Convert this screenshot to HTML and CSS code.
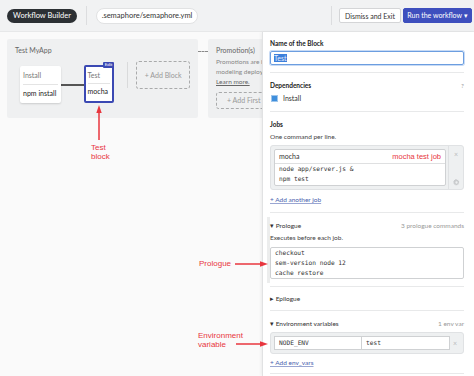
FILE: index.html
```html
<!DOCTYPE html>
<html lang="en">
<head>
  <meta charset="UTF-8">
  <meta name="viewport" content="width=device-width, initial-scale=1.0">
  <title>Workflow Builder</title>
  <link rel="stylesheet" href="styles.css">
</head>
<body>
  <header class="topbar">
    <div class="topbar-group">
      <span class="pill pill-dark">Workflow Builder</span>
      <span class="topbar-sep"></span>
      <span class="pill pill-file">.semaphore/semaphore.yml</span>
    </div>
    <div class="topbar-group">
      <span class="topbar-sep"></span>
      <button class="btn btn-dismiss">Dismiss and Exit</button>
      <button class="btn btn-primary">Run the workflow ▾</button>
    </div>
  </header>

  <main class="workspace">
    <section class="canvas">
      <div class="pipeline">
        <div class="stage">
          <div class="stage-title">Test MyApp</div>
          <div class="blocks">
            <div class="block block-install">
              <div class="block-name">Install</div>
              <div class="block-cmd">npm install</div>
            </div>
            <div class="block-link"></div>
            <div class="block block-active">
              <span class="edit-badge">Edit</span>
              <div class="block-name">Test</div>
              <div class="block-cmd">mocha</div>
            </div>
            <div class="blocks-sep"></div>
            <div class="add-block">+ Add Block</div>
          </div>
        </div>
        <div class="stage-link"></div>
        <div class="stage promotions">
          <div class="stage-title">Promotion(s)</div>
          <p class="promo-text">Promotions are ideal for<br>modeling deployment pipelines.<br><a class="promo-link">Learn more.</a></p>
          <div class="add-promo">+ Add First Promotion</div>
        </div>
      </div>
    </section>

    <aside class="panel">
      <div class="panel-section section-name">
        <div class="field-title">Name of the Block</div>
        <div class="text-input is-focused"><span class="selection">Test</span></div>
      </div>

      <div class="panel-section section-deps">
        <div class="section-head">
          <span class="field-title">Dependencies</span>
          <span class="hint">?</span>
        </div>
        <label class="checkbox-row"><span class="checkbox"></span><span>Install</span></label>
      </div>

      <div class="panel-section section-jobs">
        <div class="field-title">Jobs</div>
        <div class="field-note">One command per line.</div>
        <div class="job-list">
          <div class="job">
            <div class="job-name">mocha<span class="note note-inline">mocha test job</span></div>
            <div class="code job-code">node app/server.js &amp;<br>npm test</div>
          </div>
          <div class="job-side">
            <span class="remove">×</span>
            <svg class="gear" width="7" height="7" viewBox="0 0 16 16">
              <path d="M8 0.5l1.4 1.9 2.3-.6.3 2.4 2.2.9-1 2.2 1.3 2-2.1 1.1.1 2.4-2.4-.1-1 2.2L8 13.7l-1.9 1.4-.6-2.3-2.4.3-.3-2.4-2.2-.9 1-2.2L.3 5.6l2.1-1.1-.1-2.4 2.4.1 1-2.2L8 .5z" fill="#c9cbcd"/>
              <circle cx="8" cy="8" r="2.6" fill="#eef0f1"/>
            </svg>
          </div>
        </div>
        <a class="add-link">+ Add another job</a>
      </div>

      <div class="panel-section section-prologue">
        <div class="section-head">
          <span class="field-title toggle">▾ Prologue</span>
          <span class="count">3 prologue commands</span>
        </div>
        <div class="field-note">Executes before each job.</div>
        <div class="code code-box">checkout<br>sem-version node 12<br>cache restore</div>
      </div>

      <div class="panel-section section-epilogue">
        <span class="field-title toggle">▸ Epilogue</span>
      </div>

      <div class="panel-section section-env">
        <div class="section-head">
          <span class="field-title toggle">▾ Environment variables</span>
          <span class="count">1 env var</span>
        </div>
        <div class="env-list">
          <span class="env-input env-name">NODE_ENV</span>
          <span class="env-input env-value">test</span>
          <span class="remove">×</span>
        </div>
        <a class="add-link">+ Add env_vars</a>
      </div>
    </aside>

    <div class="annotations">
      <svg class="arrows" width="474" height="344" viewBox="0 0 474 344">
        <line x1="99" y1="108" x2="99" y2="80" stroke="#e8363e" stroke-width="1.5"/>
        <polygon points="99,73 96.3,81 101.7,81" fill="#e8363e"/>
        <line x1="235" y1="232" x2="261" y2="232" stroke="#e8363e" stroke-width="1.5"/>
        <polygon points="268,232 260,229.3 260,234.7" fill="#e8363e"/>
        <line x1="236" y1="312" x2="261" y2="312" stroke="#e8363e" stroke-width="1.5"/>
        <polygon points="268,312 260,309.3 260,314.7" fill="#e8363e"/>
      </svg>
      <div class="note note-test">Test<br>block</div>
      <div class="note note-prologue">Prologue</div>
      <div class="note note-env">Environment<br>variable</div>
    </div>
  </main>
</body>
</html>
```

FILE: styles.css
```css
*, *::before, *::after {
  margin: 0;
  padding: 0;
  box-sizing: border-box;
}
html, body {
  width: 474px;
  height: 376px;
  overflow: hidden;
}
body {
  font-family: Lato, "Noto Sans", sans-serif;
  font-size: 7px;
  color: #333;
  background: #fafafa;
}

/* top bar */
.topbar {
  height: 32px;
  display: flex;
  align-items: center;
  justify-content: space-between;
  padding: 0 2px 0 7px;
  background: #f1f2f3;
  border-bottom: 1px solid #e7e8e9;
}
.topbar-group {
  display: flex;
  align-items: center;
}
.topbar-sep {
  width: 1px;
  height: 19px;
  background: #dcdddf;
  margin: 0 9px;
}
.topbar-group:last-child .topbar-sep {
  margin: 0 7px 0 0;
}
.pill {
  display: inline-block;
  text-align: center;
  border-radius: 8px;
  font-size: 7.5px;
}
.pill-dark {
  width: 70px;
  height: 14px;
  line-height: 14px;
  background: #2c3034;
  color: #fff;
}
.pill-file {
  width: 102px;
  height: 16px;
  line-height: 14px;
  background: #fff;
  border: 1px solid #e1e2e3;
  color: #333;
}
.btn {
  height: 15px;
  font: inherit;
  font-size: 7px;
  border-radius: 2px;
  border: 1px solid #d4d5d7;
  background: #fff;
  color: #333;
}
.btn-dismiss {
  width: 62px;
}
.btn-primary {
  width: 69px;
  margin-left: 2px;
  background: #3e4fbe;
  border-color: #3e4fbe;
  color: #fff;
}

/* workspace */
.workspace {
  position: relative;
  display: flex;
  height: 344px;
}
.canvas {
  flex: 1;
  overflow: hidden;
}
.pipeline {
  display: flex;
  align-items: flex-start;
  padding: 7px 0 0 7px;
}
.stage {
  flex-shrink: 0;
  width: 191px;
  height: 79px;
  background: #eff0f1;
  border-radius: 2px;
  padding: 5px 8px 0;
}
.stage-title {
  line-height: 12px;
  font-size: 7px;
  color: #666;
}
.stage-link {
  flex-shrink: 0;
  width: 10px;
  margin-top: 12px;
  border-top: 1px dashed #8a8a8a;
}
.blocks {
  display: flex;
  align-items: flex-start;
  margin-top: 5px;
  padding-left: 5px;
}
.block {
  position: relative;
  background: #fff;
  border-radius: 2px;
  padding: 0 3px;
  font-size: 7px;
  white-space: nowrap;
}
.block-install {
  width: 41px;
  height: 37px;
  margin-top: 5px;
  box-shadow: 0 1px 2px rgba(0, 0, 0, 0.15);
}
.block-active {
  width: 31px;
  height: 38px;
  margin-top: 4px;
  padding: 0 2px;
  border: 2px solid #3b49b3;
}
.block-name {
  line-height: 18px;
  color: #777;
  border-bottom: 1px solid #e4e4e4;
}
.block-active .block-name {
  line-height: 16px;
}
.block-cmd {
  line-height: 16px;
  color: #222;
}
.block-active .block-cmd {
  line-height: 15px;
}
.edit-badge {
  position: absolute;
  top: -5px;
  right: -2px;
  padding: 0 2px;
  font-size: 4.5px;
  line-height: 6px;
  color: #fff;
  background: #3b49b3;
  border-radius: 1px;
}
.block-link {
  width: 23px;
  height: 1.5px;
  margin-top: 23px;
  background: #555;
}
.blocks-sep {
  width: 1px;
  height: 26px;
  margin: 1px 0 0 13px;
  background: #d9dadb;
}
.add-block {
  width: 54px;
  height: 28px;
  margin-left: 8px;
  line-height: 26px;
  text-align: center;
  border: 1px dashed #a9aaab;
  border-radius: 3px;
  color: #999;
  font-size: 7px;
}
.promotions {
  width: 130px;
}
.promo-text {
  line-height: 10px;
  margin-top: 1px;
  color: #888;
  white-space: nowrap;
  font-size: 6.5px;
}
.promo-link {
  color: #666;
  text-decoration: underline;
}
.add-promo {
  width: 90px;
  height: 17px;
  margin-top: 5px;
  padding-left: 10px;
  line-height: 15px;
  border: 1px dashed #a9aaab;
  border-radius: 3px;
  color: #999;
  white-space: nowrap;
}

/* side panel */
.panel {
  position: relative;
  z-index: 1;
  width: 212px;
  background: #fff;
  border-left: 1px solid #e1e2e3;
  box-shadow: -1px 0 3px rgba(0, 0, 0, 0.06);
  padding: 0 10px 0 7px;
  font-size: 6.5px;
}
.panel-section {
  border-bottom: 1px solid #e8e9ea;
}
.section-name {
  padding: 7px 0 7px;
}
.section-deps {
  padding: 8px 0 8px;
}
.section-jobs {
  padding: 8px 0 7px;
}
.section-prologue {
  padding: 8px 0 7px;
  box-shadow: -7px 0 0 -4px #eceded;
}
.section-epilogue {
  padding: 7px 0 6px;
}
.section-env {
  padding: 8px 0 5px;
}
.section-head {
  display: flex;
  justify-content: space-between;
  align-items: center;
}
.field-title {
  display: block;
  line-height: 10px;
  font-weight: 700;
  color: #222;
}
.toggle {
  font-weight: 400;
  color: #333;
}
.hint,
.count {
  line-height: 10px;
  color: #999;
}
.field-note {
  margin-top: 2px;
  line-height: 10px;
  color: #444;
}
.text-input {
  height: 14px;
  margin-top: 2px;
  padding: 0 3px;
  line-height: 12px;
  border: 1px solid #6c9ee0;
  border-radius: 2px;
  box-shadow: 0 0 0 1px #c8dbf5;
  font-size: 7px;
}
.selection {
  background: #3c7fdb;
  color: #e4edfb;
}
.checkbox-row {
  display: flex;
  align-items: center;
  gap: 5px;
  margin-top: 2px;
  padding-left: 1px;
  line-height: 10px;
  font-size: 7px;
  color: #333;
}
.checkbox {
  flex-shrink: 0;
  width: 7px;
  height: 7px;
  background: #3f8fdc;
  border: 1px solid #9fc6ec;
}
.job-list {
  display: flex;
  height: 45px;
  margin-top: 3px;
  background: #eef0f1;
  border: 1px solid #e0e2e4;
  border-radius: 3px;
}
.job {
  flex: 1;
  margin: 3px 2px 3px 3px;
  background: #fff;
  border: 1px solid #cfd1d3;
  border-radius: 2px;
}
.job-name {
  display: flex;
  justify-content: space-between;
  height: 14px;
  padding: 0 4px;
  line-height: 13px;
  font-size: 7px;
  border-bottom: 1px solid #dfe0e1;
}
.job-side {
  width: 15px;
  display: flex;
  flex-direction: column;
  align-items: center;
  justify-content: space-between;
  padding: 3px 0 3px;
  border-left: 1px solid #dfe1e3;
}
.remove {
  color: #b9bbbd;
  font-size: 7px;
  line-height: 10px;
}
.code {
  font-family: "DejaVu Sans Mono", "Liberation Mono", monospace;
  font-size: 6.2px;
  line-height: 10px;
  color: #333;
}
.job-code {
  padding: 0 4px;
}
.code-box {
  margin-top: 4px;
  padding: 0 4px;
  border: 1px solid #cfd1d3;
  border-radius: 2px;
}
.add-link {
  display: block;
  margin-top: 5px;
  line-height: 10px;
  color: #4a5fae;
  text-decoration: underline;
  text-decoration-color: #9aa6d2;
}
.section-env .add-link {
  margin-top: 4px;
}
.env-list {
  display: flex;
  align-items: center;
  margin-top: 3px;
  padding: 3px;
  background: #eef0f1;
  border: 1px solid #e0e2e4;
  border-radius: 3px;
}
.env-input {
  height: 14px;
  padding: 0 4px;
  line-height: 12px;
  background: #fff;
  border: 1px solid #cfd1d3;
  font-family: "DejaVu Sans Mono", "Liberation Mono", monospace;
  font-size: 6.2px;
  color: #333;
}
.env-name {
  width: 88px;
}
.env-value {
  width: 89px;
  margin-left: -1px;
}
.env-list .remove {
  flex: 1;
  text-align: center;
}

/* red notes laid over the screenshot */
.annotations {
  position: absolute;
  inset: 0;
  z-index: 2;
  pointer-events: none;
}
.arrows {
  position: absolute;
  left: 0;
  top: 0;
}
.note {
  font-family: "Liberation Sans", Arial, sans-serif;
  font-size: 8px;
  color: #e8363e;
}
.note-inline {
  font-size: 7.5px;
}
.annotations .note {
  position: absolute;
  line-height: 9px;
}
.note-test {
  left: 91px;
  top: 111px;
}
.note-prologue {
  left: 199px;
  top: 227px;
  line-height: 10px;
}
.note-env {
  left: 198px;
  top: 299px;
}
```
